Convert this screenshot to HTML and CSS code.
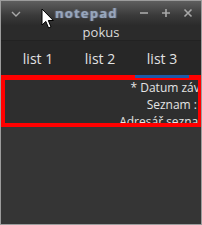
FILE: index.html
```html
<!DOCTYPE html>
<html lang="cs">
<head>
  <meta charset="UTF-8">
  <title>notepad</title>
  <link rel="stylesheet" href="styles.css">
</head>
<body>
  <div class="window">
    <div class="titlebar">
      <span class="menu-btn">
        <svg width="10" height="6" viewBox="0 0 10 6"><path d="M1 1 L5 5 L9 1" fill="none" stroke="#a8a8a8" stroke-width="1.4"/></svg>
      </span>
      <span class="title">notepad</span>
      <div class="controls">
        <span class="ctl">
          <svg width="10" height="10" viewBox="0 0 10 10"><path d="M1 5 H9" stroke="#a8a8a8" stroke-width="1.6"/></svg>
        </span>
        <span class="ctl">
          <svg width="10" height="10" viewBox="0 0 10 10"><path d="M1 5 H9 M5 1 V9" stroke="#a8a8a8" stroke-width="1.6"/></svg>
        </span>
        <span class="ctl">
          <svg width="10" height="10" viewBox="0 0 10 10"><path d="M1.5 1.5 L8.5 8.5 M8.5 1.5 L1.5 8.5" stroke="#a8a8a8" stroke-width="1.6"/></svg>
        </span>
      </div>
    </div>

    <div class="subtitle">pokus</div>

    <div class="tabs">
      <div class="tab">list 1</div>
      <div class="tab">list 2</div>
      <div class="tab active">list 3</div>
    </div>

    <div class="form">
      <div class="label wide1">* Datum závěrky :</div>
      <div class="label">Seznam :</div>
      <div class="label wide3">Adresář seznamu :</div>
    </div>

    <div class="rest"></div>

    <svg class="cursor" width="14" height="22" viewBox="0 0 14 22">
      <path d="M1 1 L1 17 L4.8 13.4 L7.6 20 L10 19 L7.3 12.5 L12.3 12.5 Z" fill="#fff" stroke="#000" stroke-width="1"/>
    </svg>
  </div>
</body>
</html>
```

FILE: styles.css
```css
* {
  box-sizing: border-box;
}

body {
  margin: 0;
  padding: 0;
  background: #353535;
  font-family: 'Open Sans', sans-serif;
}

.window {
  position: relative;
  width: 202px;
  height: 225px;
  border: 1px solid #9c9c9c;
  display: flex;
  flex-direction: column;
  overflow: hidden;
  background: #353535;
}

.titlebar {
  height: 24px;
  display: flex;
  align-items: center;
  padding: 0 8px 0 10px;
  background: linear-gradient(#5e5e5e, #3a3a3a 60%, #2c2c2c);
  flex-shrink: 0;
}

.menu-btn {
  display: flex;
  width: 10px;
  margin-top: 2px;
}

.title {
  margin-left: 34px;
  font-size: 13px;
  font-weight: bold;
  color: #98a6bc;
  text-shadow: 1px 0 1px rgba(120, 170, 230, 0.5), -1px 0 1px rgba(220, 200, 160, 0.3);
  letter-spacing: 1.2px;
}

.controls {
  margin-left: auto;
  display: flex;
  gap: 12px;
}

.ctl {
  display: flex;
  width: 10px;
  height: 10px;
}

.subtitle {
  height: 15px;
  background: #2b2b2b;
  color: #dcdcdc;
  font-size: 13px;
  line-height: 15px;
  text-align: center;
  flex-shrink: 0;
}

.tabs {
  height: 35px;
  display: flex;
  padding: 0 6px;
  background: #272727;
  border-top: 1px solid #222;
  flex-shrink: 0;
}

.tab {
  width: 62px;
  text-align: center;
  color: #e2e2e2;
  font-size: 14px;
  line-height: 36px;
  position: relative;
}

.tab.active::after {
  content: "";
  position: absolute;
  left: 4px;
  right: 4px;
  bottom: -3px;
  height: 3px;
  background: #1f5aa8;
  z-index: 2;
}

.form {
  position: relative;
  height: 52px;
  background: #2e2e2e;
  display: flex;
  flex-direction: column;
  align-items: flex-end;
  overflow: hidden;
  padding: 4px 4px 0 0;
  flex-shrink: 0;
}

/* red frame painted over the labels */
.form::after {
  content: "";
  position: absolute;
  inset: 0;
  border: 4px solid #ff0000;
  border-top-width: 5px;
  border-right-width: 3px;
  z-index: 1;
}

.label {
  color: #e4e4e4;
  font-size: 12px;
  line-height: 17px;
  white-space: nowrap;
}

.wide1 {
  margin-right: -33px;
}

.wide3 {
  margin-right: -26px;
}

.rest {
  flex: 1;
  background: #353535;
}

.cursor {
  position: absolute;
  left: 40px;
  top: 7px;
}
```
